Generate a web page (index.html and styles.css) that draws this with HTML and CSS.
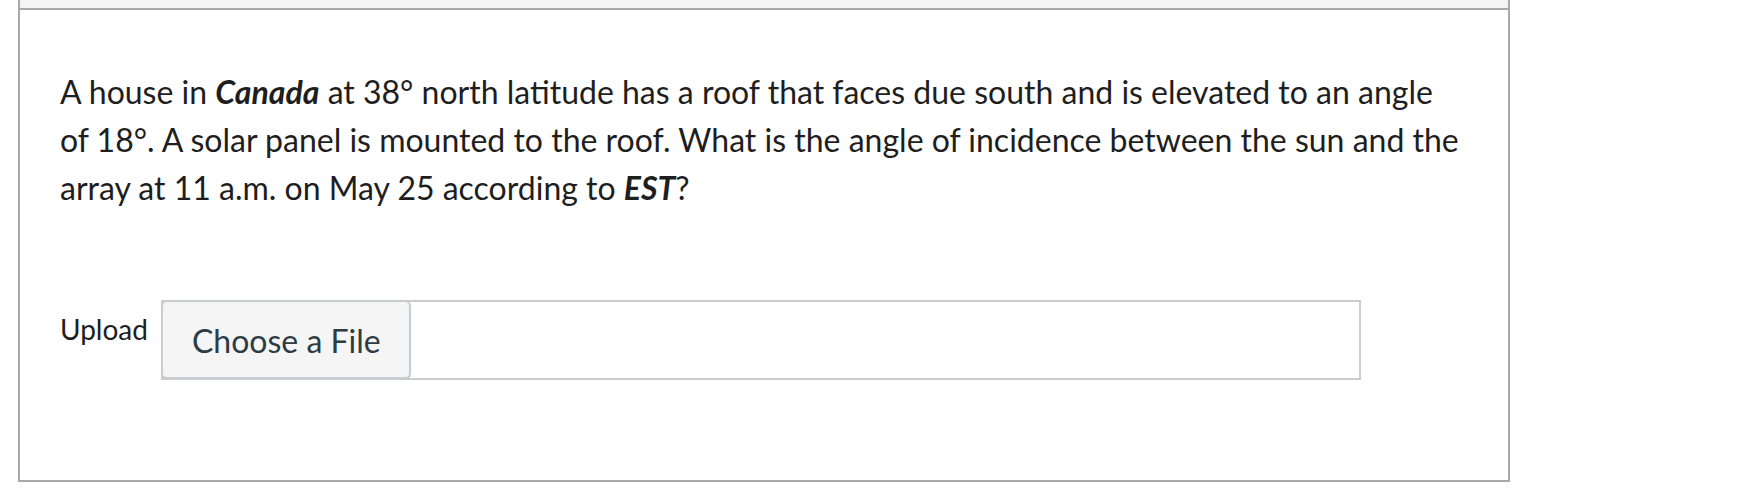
FILE: index.html
```html
<!DOCTYPE html>
<html lang="en">
<head>
<meta charset="utf-8">
<title>Question</title>
<link rel="stylesheet" href="styles.css">
</head>
<body>
<div class="question">
  <div class="question-header"></div>
  <div class="question-body">
    <p class="question-text">A house in <strong><em>Canada</em></strong> at 38° north latitude has a roof that faces due south and is elevated to an angle of 18°. A solar panel is mounted to the roof. What is the angle of incidence between the sun and the array at 11 a.m. on May 25 according to <strong><em>EST</em></strong>?</p>
    <div class="upload-row">
      <span class="upload-label">Upload</span>
      <div class="file-box">
        <span class="file-button">Choose a File</span>
      </div>
    </div>
  </div>
</div>
</body>
</html>
```

FILE: styles.css
```css
html, body {
  margin: 0;
  padding: 0;
  background: #ffffff;
}

body {
  font-family: Lato, "Noto Sans", sans-serif;
  color: #1e1e1e;
}

.question {
  margin-left: 18px;
  width: 1492px;
  border: 2px solid #a8a8a8;
  border-top: none;
  box-sizing: border-box;
}

.question-header {
  height: 8px;
  background: #f5f5f5;
  border-bottom: 2px solid #a8a8a8;
}

.question-body {
  padding: 58px 0 100px 40px;
}

.question-text {
  margin: 0;
  width: 1405px;
  font-size: 32px;
  line-height: 48px;
}

.question-text strong {
  font-weight: 700;
}

.upload-row {
  display: flex;
  align-items: flex-start;
  gap: 13px;
  margin-top: 88px;
}

.upload-label {
  font-size: 28px;
  line-height: 32px;
  padding-top: 13px;
  color: #1e1e1e;
}

.file-box {
  width: 1200px;
  height: 80px;
  box-sizing: border-box;
  border: 2px solid #c7cdd1;
  display: flex;
}

.file-button {
  margin: -2px 0 0 -2px;
  height: 80px;
  width: 250px;
  box-sizing: border-box;
  border: 2px solid #c7cdd1;
  border-bottom-width: 3px;
  border-radius: 6px;
  background: #f5f5f5;
  color: #2d3b45;
  font-size: 32px;
  display: flex;
  align-items: center;
  padding-left: 29px;
  padding-top: 2px;
}
```
